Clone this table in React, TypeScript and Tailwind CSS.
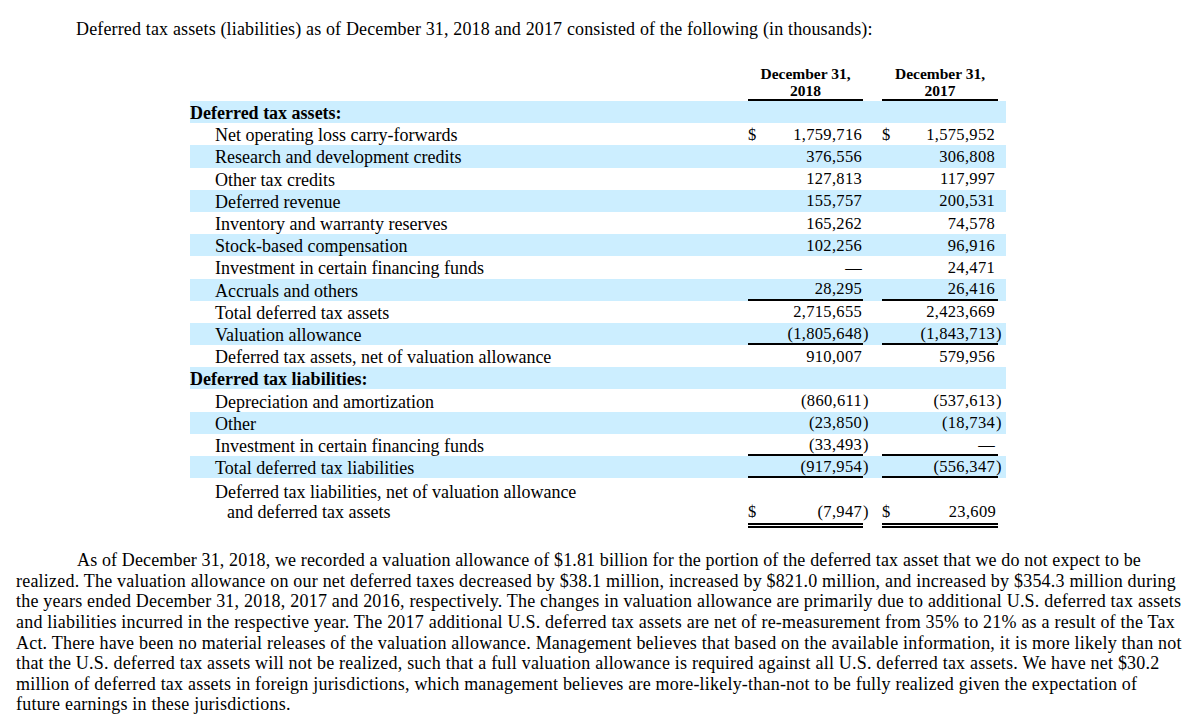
import React from 'react'

type Row = {
  label: string
  section?: boolean
  shade?: boolean
  a?: string
  b?: string
  aParen?: boolean
  bParen?: boolean
  dollar?: boolean
  line?: boolean
}

const rows: Row[] = [
  { label: 'Deferred tax assets:', section: true, shade: true },
  { label: 'Net operating loss carry-forwards', a: '1,759,716', b: '1,575,952', dollar: true },
  { label: 'Research and development credits', a: '376,556', b: '306,808', shade: true },
  { label: 'Other tax credits', a: '127,813', b: '117,997' },
  { label: 'Deferred revenue', a: '155,757', b: '200,531', shade: true },
  { label: 'Inventory and warranty reserves', a: '165,262', b: '74,578' },
  { label: 'Stock-based compensation', a: '102,256', b: '96,916', shade: true },
  { label: 'Investment in certain financing funds', a: '—', b: '24,471' },
  { label: 'Accruals and others', a: '28,295', b: '26,416', shade: true, line: true },
  { label: 'Total deferred tax assets', a: '2,715,655', b: '2,423,669' },
  { label: 'Valuation allowance', a: '(1,805,648', b: '(1,843,713', aParen: true, bParen: true, shade: true, line: true },
  { label: 'Deferred tax assets, net of valuation allowance', a: '910,007', b: '579,956' },
  { label: 'Deferred tax liabilities:', section: true, shade: true },
  { label: 'Depreciation and amortization', a: '(860,611', b: '(537,613', aParen: true, bParen: true },
  { label: 'Other', a: '(23,850', b: '(18,734', aParen: true, bParen: true, shade: true },
  { label: 'Investment in certain financing funds', a: '(33,493', b: '—', aParen: true, line: true },
  { label: 'Total deferred tax liabilities', a: '(917,954', b: '(556,347', aParen: true, bParen: true, shade: true, line: true },
]

const serif = { fontFamily: '"Liberation Serif", "Times New Roman", serif' }

function Amount({ value, paren, dollar, border, width }: { value?: string; paren?: boolean; dollar?: boolean; border?: string; width: string }) {
  return (
    <div className={`flex h-full items-center justify-between pt-[2px] text-[16.5px] tracking-[0.3px] ${width} ${border ?? ''}`}>
      <span>{dollar ? '$' : ''}</span>
      <span className="flex pr-[1px]">
        <span>{value}</span>
        {paren && <span className="-mr-[9px] w-[9px] pl-[1px]">)</span>}
      </span>
    </div>
  )
}

export default function App() {
  return (
    <div className="min-h-screen bg-white pt-[19px] text-black" style={serif}>
      <p className="pl-[76px] text-[18px] leading-[21px] tracking-[0.15px]">
        Deferred tax assets (liabilities) as of December 31, 2018 and 2017 consisted of the following (in thousands):
      </p>

      <div className="ml-[190px] mt-[25px] w-[816px]">
        {/* header */}
        <div className="flex text-[15.5px] font-bold leading-[17px]">
          <div className="w-[558px]" />
          <div className="w-[115px] border-b-2 border-black text-center">
            December 31,<br />2018
          </div>
          <div className="w-[19px]" />
          <div className="w-[116px] border-b-2 border-black text-center">
            December 31,<br />2017
          </div>
        </div>

        {rows.map((r, i) => {
          const line = r.line ? 'border-b-2 border-black' : ''
          return (
            <div key={i} className={`flex h-[22.2px] items-center ${r.shade ? 'bg-[#cceeff]' : ''}`}>
              <div className={`w-[558px] pt-[2px] text-[18px] leading-[22px] ${r.section ? 'font-bold' : 'pl-[25px]'}`}>
                {r.label}
              </div>
              {!r.section && (
                <>
                  <Amount value={r.a} paren={r.aParen} dollar={r.dollar} border={line} width="w-[115px]" />
                  <div className="w-[19px]" />
                  <Amount value={r.b} paren={r.bParen} dollar={r.dollar} border={line} width="w-[116px] pr-[2px]" />
                </>
              )}
            </div>
          )
        })}

        {/* final row */}
        <div className="flex h-[50px]">
          <div className="w-[558px] pl-[25px] pt-[4px] text-[18px] leading-[20px]">
            Deferred tax liabilities, net of valuation allowance
            <div className="pl-[12px]">and deferred tax assets</div>
          </div>
          <div className="flex w-[115px] items-end justify-between border-b-[5px] border-double border-black pb-[1px] text-[16.5px] leading-[20px] tracking-[0.3px]">
            <span>$</span>
            <span className="flex pr-[1px]">
              <span>(7,947</span>
              <span className="-mr-[9px] w-[9px] pl-[1px]">)</span>
            </span>
          </div>
          <div className="w-[19px]" />
          <div className="flex w-[116px] items-end justify-between border-b-[5px] border-double border-black pb-[1px] pr-[2px] text-[16.5px] leading-[20px] tracking-[0.3px]">
            <span>$</span>
            <span>23,609</span>
          </div>
        </div>
      </div>

      <p className="mt-[22px] whitespace-nowrap pl-[16px] text-[18px] leading-[20.6px] tracking-[0.21px]">
        <span className="pl-[61px] tracking-[0.14px]">As of December 31, 2018, we recorded a valuation allowance of $1.81 billion for the portion of the deferred tax asset that we do not expect to be</span>
        <br />
        realized. The valuation allowance on our net deferred taxes decreased by $38.1 million, increased by $821.0 million, and increased by $354.3 million during
        <br />
        the years ended December 31, 2018, 2017 and 2016, respectively. The changes in valuation allowance are primarily due to additional U.S. deferred tax assets
        <br />
        and liabilities incurred in the respective year. The 2017 additional U.S. deferred tax assets are net of re-measurement from 35% to 21% as a result of the Tax
        <br />
        Act. There have been no material releases of the valuation allowance. Management believes that based on the available information, it is more likely than not
        <br />
        that the U.S. deferred tax assets will not be realized, such that a full valuation allowance is required against all U.S. deferred tax assets. We have net $30.2
        <br />
        million of deferred tax assets in foreign jurisdictions, which management believes are more-likely-than-not to be fully realized given the expectation of
        <br />
        future earnings in these jurisdictions.
      </p>
    </div>
  )
}
